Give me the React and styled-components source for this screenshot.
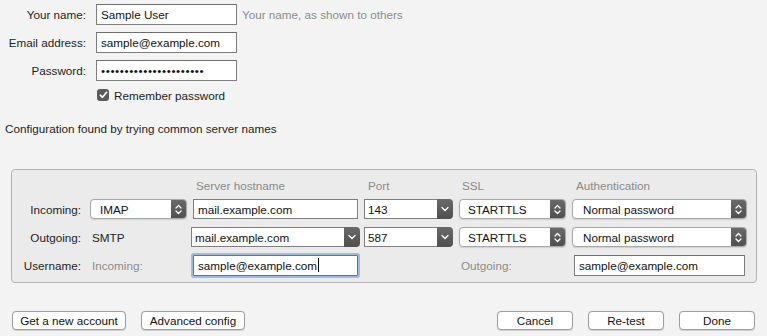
import React from 'react'
import styled, { createGlobalStyle } from 'styled-components'

const GlobalStyle = createGlobalStyle`
  html, body {
    margin: 0;
    padding: 0;
    background: #f3f3f3;
  }
  body {
    font-family: "Liberation Sans", Arial, sans-serif;
    font-size: 11.7px;
    color: #1e1e1e;
  }
`

const Page = styled.div`
  width: 767px;
  height: 336px;
  box-sizing: border-box;
  padding-top: 4px;
  overflow: hidden;
`

const IdentityForm = styled.div`
  display: grid;
  grid-template-columns: 91px 141px auto;
  grid-template-rows: 21px 21px 21px 14px;
  column-gap: 5px;
  row-gap: 7px;
  align-items: center;
`

const Label = styled.label`
  padding-right: ${p => p.$pad || 5}px;
  white-space: nowrap;
  color: #1e1e1e;
  text-align: right;
`

const Hint = styled.span`
  color: #8d8d8d;
  white-space: nowrap;
`

const TextField = styled.input`
  box-sizing: border-box;
  width: 100%;
  height: 21px;
  margin: 0;
  padding: 0 4px;
  border: 1px solid #7d7d7d;
  border-top-color: #6e6e6e;
  background: #fff;
  font-family: inherit;
  font-size: 11.7px;
  color: #111;
  outline: none;
  letter-spacing: ${p => (p.type === 'password' ? '0.6px' : 'normal')};
`

const HostField = styled.div`
  box-sizing: border-box;
  height: 20px;
  display: flex;
  align-items: center;
  padding: 0 4px;
  border: 1px solid #7d7d7d;
  background: #fff;
  color: #111;
  white-space: nowrap;
`

const FocusedField = styled.div`
  box-sizing: border-box;
  width: 100%;
  height: 21px;
  padding: 0 4px;
  display: flex;
  align-items: center;
  border: 1px solid #4f79a8;
  box-shadow: 0 0 0 2px #9dbbdf;
  background: #fff;
  color: #111;
  border-radius: 1px;
`

const Caret = styled.span`
  display: inline-block;
  width: 1px;
  height: 14px;
  background: #000;
  margin-left: 1px;
`

const CheckRow = styled.div`
  grid-column: 2 / 4;
  display: flex;
  align-items: center;
  gap: 5px;
  height: 14px;
  padding-left: 1px;
`

const CheckBox = styled.span`
  width: 12px;
  height: 12px;
  border-radius: 3px;
  background: #5b5b5b;
  display: flex;
  align-items: center;
  justify-content: center;
`

const Status = styled.p`
  margin: 19px 0 0 5px;
  line-height: 16px;
`

const Panel = styled.div`
  margin: 32px 0 0 11px;
  width: 746px;
  box-sizing: border-box;
  border: 1px solid #b3b3b3;
  border-radius: 4px;
  background: #ebebeb;
  padding: 9px 8px 7px 0;
  display: grid;
  grid-template-columns: 72px 97px 165px 89px 107px 175px;
  grid-template-rows: 12px 20px 20px 20px;
  column-gap: 6px;
  row-gap: 8px;
  align-items: center;
`

const ColumnHead = styled.span`
  color: #8a8a8a;
  padding-left: ${p => p.$pad || 3}px;
  white-space: nowrap;
`

const Plain = styled.span`
  padding-left: 2px;
  color: ${p => (p.$muted ? '#8c8c8c' : '#1e1e1e')};
`

const PopUp = styled.div`
  box-sizing: border-box;
  height: 20px;
  display: flex;
  border: 1px solid #a9a9a9;
  border-radius: 4px;
  background: #fff;
  overflow: hidden;
  box-shadow: 0 0.5px 1px rgba(0, 0, 0, 0.12);
`

const PopUpValue = styled.span`
  flex: 1;
  display: flex;
  align-items: center;
  padding-left: ${p => p.$pad || 9}px;
  color: #111;
  white-space: nowrap;
`

const Stepper = styled.span`
  width: 15px;
  background: linear-gradient(#6a6a6a, #4f4f4f);
  display: flex;
  align-items: center;
  justify-content: center;
`

const Combo = styled.div`
  box-sizing: border-box;
  height: 20px;
  display: flex;
  margin: ${p => (p.$wide ? '0 -2px' : '0')};
`

const ComboInput = styled.span`
  flex: 1;
  display: flex;
  align-items: center;
  padding-left: 3px;
  border: 1px solid #7f7f7f;
  border-right: none;
  background: #fff;
  color: #111;
  white-space: nowrap;
`

const ComboButton = styled.span`
  width: 16px;
  border-radius: 0 4px 4px 0;
  background: linear-gradient(#6a6a6a, #4f4f4f);
  display: flex;
  align-items: center;
  justify-content: center;
`

const OutgoingUser = styled(TextField)`
  width: 171px;
  margin-left: 2px;
`

const Footer = styled.div`
  display: flex;
  align-items: center;
  gap: 15px;
  padding: 0 12px;
  margin-top: 28px;
`

const Spacer = styled.div`
  flex: 1;
`

const Button = styled.button`
  box-sizing: border-box;
  height: 19px;
  width: ${p => p.$w}px;
  padding: 0;
  border: 1px solid #9e9e9e;
  border-radius: 4px;
  background: #fff;
  box-shadow: 0 0.5px 1px rgba(0, 0, 0, 0.15);
  font-family: inherit;
  font-size: 11.7px;
  color: #111;
`

const StepIcon = () => (
  <svg width="7" height="11" viewBox="0 0 7 11">
    <path d="M1 4 L3.5 1.5 L6 4 M1 7 L3.5 9.5 L6 7" fill="none" stroke="#fff" strokeWidth="1.3" strokeLinecap="round" strokeLinejoin="round" />
  </svg>
)

const DownIcon = () => (
  <svg width="8" height="6" viewBox="0 0 8 6">
    <path d="M1 1.5 L4 4.5 L7 1.5" fill="none" stroke="#fff" strokeWidth="1.3" strokeLinecap="round" strokeLinejoin="round" />
  </svg>
)

const CheckIcon = () => (
  <svg width="9" height="8" viewBox="0 0 9 8">
    <path d="M1.3 4.2 L3.5 6.3 L7.6 1.3" fill="none" stroke="#fff" strokeWidth="1.6" strokeLinecap="round" strokeLinejoin="round" />
  </svg>
)

function Select({ value, pad }) {
  return (
    <PopUp>
      <PopUpValue $pad={pad}>{value}</PopUpValue>
      <Stepper><StepIcon /></Stepper>
    </PopUp>
  )
}

function ComboBox({ value, wide }) {
  return (
    <Combo $wide={wide}>
      <ComboInput>{value}</ComboInput>
      <ComboButton><DownIcon /></ComboButton>
    </Combo>
  )
}

export default function App() {
  return (
    <Page>
      <GlobalStyle />
      <IdentityForm>
        <Label>Your name:</Label>
        <TextField readOnly value="Sample User" />
        <Hint>Your name, as shown to others</Hint>

        <Label>Email address:</Label>
        <TextField readOnly value="sample@example.com" />
        <span />

        <Label>Password:</Label>
        <TextField readOnly type="password" value="samplepassword12345678" />
        <span />

        <span />
        <CheckRow>
          <CheckBox><CheckIcon /></CheckBox>
          Remember password
        </CheckRow>
      </IdentityForm>

      <Status>Configuration found by trying common server names</Status>

      <Panel>
        <span />
        <span />
        <ColumnHead>Server hostname</ColumnHead>
        <ColumnHead $pad={4}>Port</ColumnHead>
        <ColumnHead>SSL</ColumnHead>
        <ColumnHead $pad={4}>Authentication</ColumnHead>

        <Label $pad={3}>Incoming:</Label>
        <Select value="IMAP" />
        <HostField>mail.example.com</HostField>
        <ComboBox value="143" />
        <Select value="STARTTLS" pad={8} />
        <Select value="Normal password" pad={10} />

        <Label $pad={3}>Outgoing:</Label>
        <Plain>SMTP</Plain>
        <ComboBox value="mail.example.com" wide />
        <ComboBox value="587" />
        <Select value="STARTTLS" pad={8} />
        <Select value="Normal password" pad={10} />

        <Label $pad={3}>Username:</Label>
        <Plain $muted>Incoming:</Plain>
        <FocusedField>sample@example.com<Caret /></FocusedField>
        <span />
        <Plain $muted>Outgoing:</Plain>
        <OutgoingUser readOnly value="sample@example.com" />
      </Panel>

      <Footer>
        <Button $w={114}>Get a new account</Button>
        <Button $w={104}>Advanced config</Button>
        <Spacer />
        <Button $w={76}>Cancel</Button>
        <Button $w={76}>Re-test</Button>
        <Button $w={76}>Done</Button>
      </Footer>
    </Page>
  )
}
